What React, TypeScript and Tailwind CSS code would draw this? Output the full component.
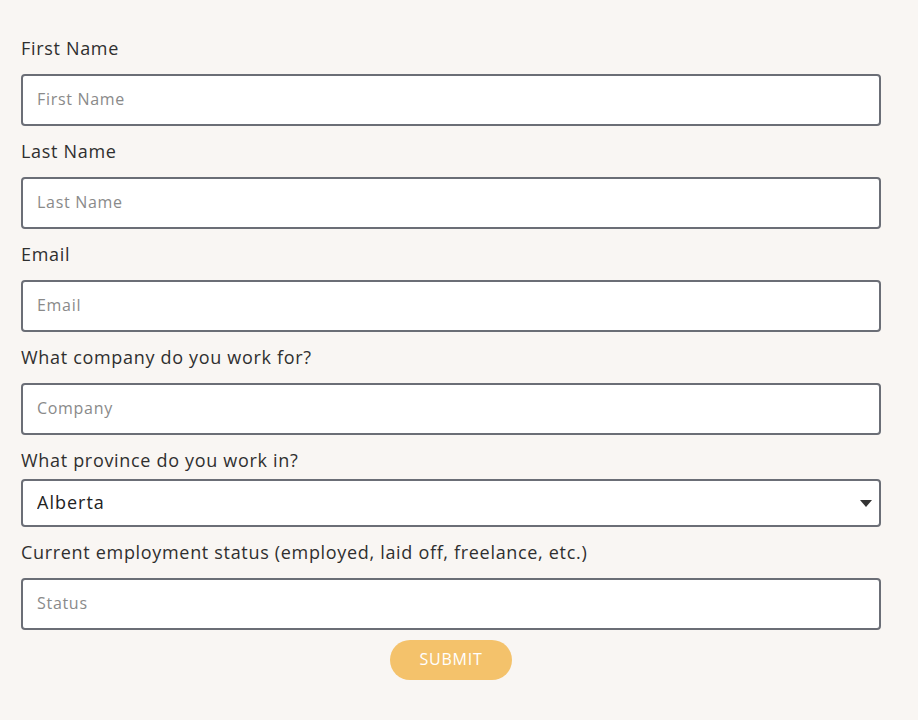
import React from "react";

const fields = [
  { label: "First Name", placeholder: "First Name" },
  { label: "Last Name", placeholder: "Last Name" },
  { label: "Email", placeholder: "Email" },
  { label: "What company do you work for?", placeholder: "Company" },
];

const inputClass =
  "block w-full h-[52px] rounded-[4px] border-2 border-[#6b6e76] bg-white px-[14px] pb-[3px] text-[16px] tracking-[0.7px] text-[#333] placeholder:text-[#8a8a8a] outline-none";

const labelClass = "block h-[27px] text-[18px] leading-[27px] tracking-[0.68px] text-[#2f2f2f]";

const App = () => {
  return (
    <div
      className="min-h-[720px] w-full bg-[#f9f6f3] pt-[35px] pl-[21px] pr-[37px]"
      style={{ fontFamily: "'Open Sans', Lato, sans-serif" }}
    >
      <form className="flex flex-col" onSubmit={(e) => e.preventDefault()}>
        {fields.map((f) => (
          <div key={f.label} className="mb-[12px]">
            <label className={labelClass + " mb-[12px]"}>{f.label}</label>
            <input type="text" placeholder={f.placeholder} className={inputClass} />
          </div>
        ))}

        {/* province select */}
        <div className="mb-[12px]">
          <label className={labelClass + " mb-[5px]"}>What province do you work in?</label>
          <div className="relative">
            <select className="block w-full h-[48px] appearance-none rounded-[4px] border-2 border-[#6b6e76] bg-white px-[14px] pb-[2px] text-[18px] tracking-[1px] text-[#222] outline-none">
              <option>Alberta</option>
              <option>British Columbia</option>
              <option>Manitoba</option>
              <option>Ontario</option>
              <option>Quebec</option>
            </select>
            <svg
              className="pointer-events-none absolute right-[9px] top-[21px]"
              width="12"
              height="7"
              viewBox="0 0 12 7"
            >
              <path d="M0 0h12L6 7z" fill="#333" />
            </svg>
          </div>
        </div>

        <div>
          <label className={labelClass + " mb-[12px]"}>
            Current employment status (employed, laid off, freelance, etc.)
          </label>
          <input type="text" placeholder="Status" className={inputClass} />
        </div>

        <div className="mt-[10px] flex justify-center">
          <button
            type="submit"
            className="h-[40px] w-[122px] rounded-full bg-[#f4c26b] pb-[2px] text-[16px] font-medium tracking-[0.8px] uppercase text-white"
          >
            Submit
          </button>
        </div>
      </form>
    </div>
  );
};

export default App;
